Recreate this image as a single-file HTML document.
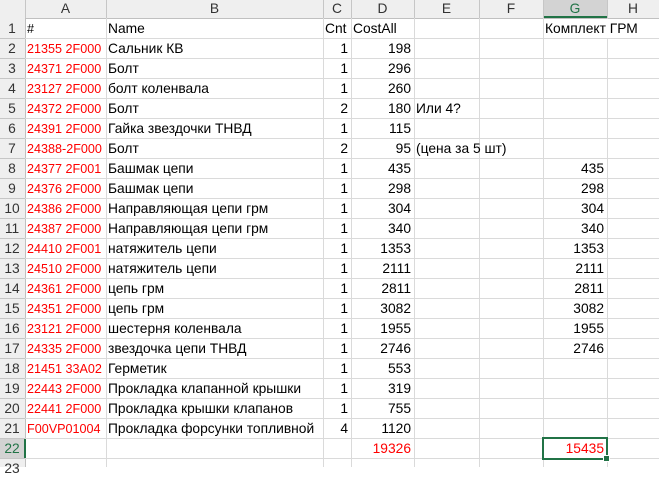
<!DOCTYPE html>
<html><head><meta charset="utf-8"><style>
body{margin:0;background:#fff;width:659px;height:467px;overflow:hidden;position:relative;font-family:"Liberation Sans","DejaVu Sans",sans-serif;font-size:13.8px;color:#000}
.hd{position:absolute;left:0;top:0;width:659px;height:18px;background:#efefef;border-bottom:1px solid #c0c0c0}
.rn{position:absolute;left:0;top:18px;width:25px;height:449px;background:#efefef;border-right:1px solid #c0c0c0}
.v{position:absolute;top:18px;width:1px;height:449px;background:#dadada}
.vh{position:absolute;top:0;width:1px;height:18px;background:#c6c6c6}
.hz{position:absolute;left:25px;width:634px;height:1px;background:#dadada}
.hzn{position:absolute;left:0;width:25px;height:1px;background:#c6c6c6}
.row{position:absolute;left:0;height:20px;width:659px;line-height:20px}
.row span,.hd span{position:absolute;white-space:nowrap;overflow:hidden}
.hd span{top:0;line-height:18px;text-align:center;color:#333}
.n{left:0;width:24px;text-align:center;color:#333}
.row span.a{left:27px;width:79px;font-size:12.6px;overflow:visible}.b{left:108px;width:214px}.c{left:324px;width:24px;text-align:right}
.d{left:352px;width:59px;text-align:right}.e{left:416px;width:120px}.g{left:545px;width:59px;text-align:right}
.g1{left:545px;width:100px;background:#fff;height:19px}
.red{color:#ff0000}
</style></head><body>
<div class="hd">
<span style="left:25px;width:81px">A</span><span style="left:106px;width:217px">B</span><span style="left:323px;width:28px">C</span><span style="left:351px;width:63px">D</span><span style="left:414px;width:65px">E</span><span style="left:479px;width:64px">F</span><span style="left:543px;width:64px;background:#d3d3d3;color:#217346;height:16px;border-bottom:2px solid #217346">G</span><span style="left:607px;width:52px">H</span>
</div>
<div class="rn"></div>
<div style="position:absolute;left:0;top:438px;width:24px;height:20px;background:#d3d3d3;border-right:2px solid #217346"></div>
<div class="vh" style="left:25px"></div><div class="vh" style="left:106px"></div><div class="vh" style="left:323px"></div><div class="vh" style="left:351px"></div><div class="vh" style="left:414px"></div><div class="vh" style="left:479px"></div><div class="vh" style="left:543px"></div><div class="vh" style="left:607px"></div>
<div class="v" style="left:106px"></div><div class="v" style="left:323px"></div><div class="v" style="left:351px"></div><div class="v" style="left:414px"></div><div class="v" style="left:479px"></div><div class="v" style="left:543px"></div><div class="v" style="left:607px"></div>
<div class="hz" style="top:38px"></div><div class="hz" style="top:58px"></div><div class="hz" style="top:78px"></div><div class="hz" style="top:98px"></div><div class="hz" style="top:118px"></div><div class="hz" style="top:138px"></div><div class="hz" style="top:158px"></div><div class="hz" style="top:178px"></div><div class="hz" style="top:198px"></div><div class="hz" style="top:218px"></div><div class="hz" style="top:238px"></div><div class="hz" style="top:258px"></div><div class="hz" style="top:278px"></div><div class="hz" style="top:298px"></div><div class="hz" style="top:318px"></div><div class="hz" style="top:338px"></div><div class="hz" style="top:358px"></div><div class="hz" style="top:378px"></div><div class="hz" style="top:398px"></div><div class="hz" style="top:418px"></div><div class="hz" style="top:438px"></div><div class="hz" style="top:458px"></div>
<div class="hzn" style="top:38px"></div><div class="hzn" style="top:58px"></div><div class="hzn" style="top:78px"></div><div class="hzn" style="top:98px"></div><div class="hzn" style="top:118px"></div><div class="hzn" style="top:138px"></div><div class="hzn" style="top:158px"></div><div class="hzn" style="top:178px"></div><div class="hzn" style="top:198px"></div><div class="hzn" style="top:218px"></div><div class="hzn" style="top:238px"></div><div class="hzn" style="top:258px"></div><div class="hzn" style="top:278px"></div><div class="hzn" style="top:298px"></div><div class="hzn" style="top:318px"></div><div class="hzn" style="top:338px"></div><div class="hzn" style="top:358px"></div><div class="hzn" style="top:378px"></div><div class="hzn" style="top:398px"></div><div class="hzn" style="top:418px"></div><div class="hzn" style="top:438px"></div><div class="hzn" style="top:458px"></div>

<div class="row" style="top:19px"><span class="n">1</span><span class="a">#</span><span class="b">Name</span><span class="c" style="left:325px;text-align:left">Cnt</span><span class="d" style="text-align:left;left:353px">CostAll</span><span class="g1">Комплект ГРМ</span></div>
<div class="row" style="top:39px"><span class="n">2</span><span class="a red">21355 2F000</span><span class="b">Сальник КВ</span><span class="c">1</span><span class="d">198</span></div>
<div class="row" style="top:59px"><span class="n">3</span><span class="a red">24371 2F000</span><span class="b">Болт</span><span class="c">1</span><span class="d">296</span></div>
<div class="row" style="top:79px"><span class="n">4</span><span class="a red">23127 2F000</span><span class="b">болт коленвала</span><span class="c">1</span><span class="d">260</span></div>
<div class="row" style="top:99px"><span class="n">5</span><span class="a red">24372 2F000</span><span class="b">Болт</span><span class="c">2</span><span class="d">180</span><span class="e">Или 4?</span></div>
<div class="row" style="top:119px"><span class="n">6</span><span class="a red">24391 2F000</span><span class="b">Гайка звездочки ТНВД</span><span class="c">1</span><span class="d">115</span></div>
<div class="row" style="top:139px"><span class="n">7</span><span class="a red">24388-2F000</span><span class="b">Болт</span><span class="c">2</span><span class="d">95</span><span class="e">(цена за 5 шт)</span></div>
<div class="row" style="top:159px"><span class="n">8</span><span class="a red">24377 2F001</span><span class="b">Башмак цепи</span><span class="c">1</span><span class="d">435</span><span class="g">435</span></div>
<div class="row" style="top:179px"><span class="n">9</span><span class="a red">24376 2F000</span><span class="b">Башмак цепи</span><span class="c">1</span><span class="d">298</span><span class="g">298</span></div>
<div class="row" style="top:199px"><span class="n">10</span><span class="a red">24386 2F000</span><span class="b">Направляющая цепи грм</span><span class="c">1</span><span class="d">304</span><span class="g">304</span></div>
<div class="row" style="top:219px"><span class="n">11</span><span class="a red">24387 2F000</span><span class="b">Направляющая цепи грм</span><span class="c">1</span><span class="d">340</span><span class="g">340</span></div>
<div class="row" style="top:239px"><span class="n">12</span><span class="a red">24410 2F001</span><span class="b">натяжитель цепи</span><span class="c">1</span><span class="d">1353</span><span class="g">1353</span></div>
<div class="row" style="top:259px"><span class="n">13</span><span class="a red">24510 2F000</span><span class="b">натяжитель цепи</span><span class="c">1</span><span class="d">2111</span><span class="g">2111</span></div>
<div class="row" style="top:279px"><span class="n">14</span><span class="a red">24361 2F000</span><span class="b">цепь грм</span><span class="c">1</span><span class="d">2811</span><span class="g">2811</span></div>
<div class="row" style="top:299px"><span class="n">15</span><span class="a red">24351 2F000</span><span class="b">цепь грм</span><span class="c">1</span><span class="d">3082</span><span class="g">3082</span></div>
<div class="row" style="top:319px"><span class="n">16</span><span class="a red">23121 2F000</span><span class="b">шестерня коленвала</span><span class="c">1</span><span class="d">1955</span><span class="g">1955</span></div>
<div class="row" style="top:339px"><span class="n">17</span><span class="a red">24335 2F000</span><span class="b">звездочка цепи ТНВД</span><span class="c">1</span><span class="d">2746</span><span class="g">2746</span></div>
<div class="row" style="top:359px"><span class="n">18</span><span class="a red">21451 33A02</span><span class="b">Герметик</span><span class="c">1</span><span class="d">553</span></div>
<div class="row" style="top:379px"><span class="n">19</span><span class="a red">22443 2F000</span><span class="b">Прокладка клапанной крышки</span><span class="c">1</span><span class="d">319</span></div>
<div class="row" style="top:399px"><span class="n">20</span><span class="a red">22441 2F000</span><span class="b">Прокладка крышки клапанов</span><span class="c">1</span><span class="d">755</span></div>
<div class="row" style="top:419px"><span class="n">21</span><span class="a red">F00VP01004</span><span class="b">Прокладка форсунки топливной</span><span class="c">4</span><span class="d">1120</span></div>
<div class="row" style="top:439px"><span class="n" style="color:#217346">22</span><span class="d red">19326</span><span class="g red">15435</span></div>
<div class="row" style="top:459px"><span class="n">23</span></div>
<div style="position:absolute;left:542px;top:437px;width:62px;height:19px;border:2px solid #217346"></div>
<div style="position:absolute;left:603px;top:455px;width:5px;height:5px;background:#217346;border:1px solid #fff"></div>
</body></html>
